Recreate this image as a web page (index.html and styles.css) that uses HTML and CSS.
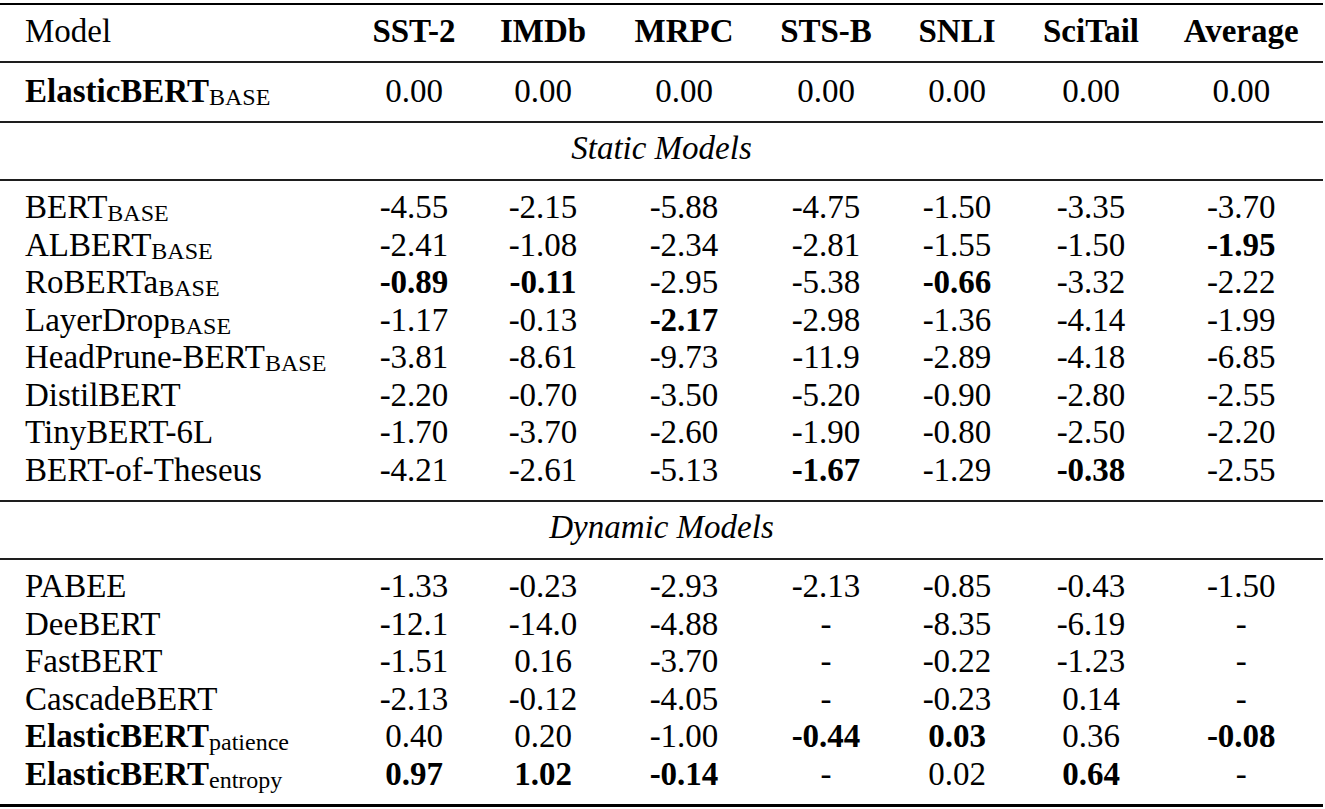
FILE: index.html
```html
<!DOCTYPE html>
<html lang="en">
<head>
<meta charset="utf-8">
<title>ElasticBERT results</title>
<link rel="stylesheet" href="styles.css">
</head>
<body>
<div class="table">
  <div class="section sec-head">
    <div class="grid">
      <div class="cell name">Model</div>
      <div class="cell b">SST-2</div>
      <div class="cell b">IMDb</div>
      <div class="cell b">MRPC</div>
      <div class="cell b">STS-B</div>
      <div class="cell b">SNLI</div>
      <div class="cell b">SciTail</div>
      <div class="cell b">Average</div>
    </div>
  </div>
  <div class="section sec-base">
    <div class="grid">
      <div class="cell name"><span class="b">ElasticBERT</span><span class="sub">BASE</span></div>
      <div class="cell">0.00</div>
      <div class="cell">0.00</div>
      <div class="cell">0.00</div>
      <div class="cell">0.00</div>
      <div class="cell">0.00</div>
      <div class="cell">0.00</div>
      <div class="cell">0.00</div>
    </div>
  </div>
  <div class="section sec-title">
    <div class="title">Static Models</div>
  </div>
  <div class="section sec-rows">
    <div class="grid">
      <div class="cell name">BERT<span class="sub">BASE</span></div>
      <div class="cell">-4.55</div><div class="cell">-2.15</div><div class="cell">-5.88</div><div class="cell">-4.75</div><div class="cell">-1.50</div><div class="cell">-3.35</div><div class="cell">-3.70</div>

      <div class="cell name">ALBERT<span class="sub">BASE</span></div>
      <div class="cell">-2.41</div><div class="cell">-1.08</div><div class="cell">-2.34</div><div class="cell">-2.81</div><div class="cell">-1.55</div><div class="cell">-1.50</div><div class="cell b">-1.95</div>

      <div class="cell name">RoBERTa<span class="sub">BASE</span></div>
      <div class="cell b">-0.89</div><div class="cell b">-0.11</div><div class="cell">-2.95</div><div class="cell">-5.38</div><div class="cell b">-0.66</div><div class="cell">-3.32</div><div class="cell">-2.22</div>

      <div class="cell name">LayerDrop<span class="sub">BASE</span></div>
      <div class="cell">-1.17</div><div class="cell">-0.13</div><div class="cell b">-2.17</div><div class="cell">-2.98</div><div class="cell">-1.36</div><div class="cell">-4.14</div><div class="cell">-1.99</div>

      <div class="cell name">HeadPrune-BERT<span class="sub">BASE</span></div>
      <div class="cell">-3.81</div><div class="cell">-8.61</div><div class="cell">-9.73</div><div class="cell">-11.9</div><div class="cell">-2.89</div><div class="cell">-4.18</div><div class="cell">-6.85</div>

      <div class="cell name">DistilBERT</div>
      <div class="cell">-2.20</div><div class="cell">-0.70</div><div class="cell">-3.50</div><div class="cell">-5.20</div><div class="cell">-0.90</div><div class="cell">-2.80</div><div class="cell">-2.55</div>

      <div class="cell name">TinyBERT-6L</div>
      <div class="cell">-1.70</div><div class="cell">-3.70</div><div class="cell">-2.60</div><div class="cell">-1.90</div><div class="cell">-0.80</div><div class="cell">-2.50</div><div class="cell">-2.20</div>

      <div class="cell name">BERT-of-Theseus</div>
      <div class="cell">-4.21</div><div class="cell">-2.61</div><div class="cell">-5.13</div><div class="cell b">-1.67</div><div class="cell">-1.29</div><div class="cell b">-0.38</div><div class="cell">-2.55</div>
    </div>
  </div>
  <div class="section sec-title">
    <div class="title">Dynamic Models</div>
  </div>
  <div class="section sec-rows last">
    <div class="grid">
      <div class="cell name">PABEE</div>
      <div class="cell">-1.33</div><div class="cell">-0.23</div><div class="cell">-2.93</div><div class="cell">-2.13</div><div class="cell">-0.85</div><div class="cell">-0.43</div><div class="cell">-1.50</div>

      <div class="cell name">DeeBERT</div>
      <div class="cell">-12.1</div><div class="cell">-14.0</div><div class="cell">-4.88</div><div class="cell">-</div><div class="cell">-8.35</div><div class="cell">-6.19</div><div class="cell">-</div>

      <div class="cell name">FastBERT</div>
      <div class="cell">-1.51</div><div class="cell">0.16</div><div class="cell">-3.70</div><div class="cell">-</div><div class="cell">-0.22</div><div class="cell">-1.23</div><div class="cell">-</div>

      <div class="cell name">CascadeBERT</div>
      <div class="cell">-2.13</div><div class="cell">-0.12</div><div class="cell">-4.05</div><div class="cell">-</div><div class="cell">-0.23</div><div class="cell">0.14</div><div class="cell">-</div>

      <div class="cell name"><span class="b">ElasticBERT</span><span class="sub">patience</span></div>
      <div class="cell">0.40</div><div class="cell">0.20</div><div class="cell">-1.00</div><div class="cell b">-0.44</div><div class="cell b">0.03</div><div class="cell">0.36</div><div class="cell b">-0.08</div>

      <div class="cell name"><span class="b">ElasticBERT</span><span class="sub">entropy</span></div>
      <div class="cell b">0.97</div><div class="cell b">1.02</div><div class="cell b">-0.14</div><div class="cell">-</div><div class="cell">0.02</div><div class="cell b">0.64</div><div class="cell">-</div>
    </div>
  </div>
</div>
</body>
</html>
```

FILE: styles.css
```css
html, body {
  margin: 0;
  padding: 0;
  background: #ffffff;
}

body {
  font-family: "Liberation Serif", "Times New Roman", serif;
  font-size: 33px;
  color: #000000;
}

.table {
  width: 1323px;
  margin-top: 3px;
  border-top: 2px solid #000000;
  border-bottom: 3px solid #000000;
}

.section {
  border-bottom: 2px solid #1e1e1e;
}

.section.last {
  border-bottom: none;
}

.grid {
  display: grid;
  grid-template-columns: 349.5px 129px 129px 153px 131px 131px 137px 163.5px;
  line-height: 37.5px;
}

.cell {
  text-align: center;
  white-space: nowrap;
}

.cell.name {
  text-align: left;
  padding-left: 25px;
}

.b {
  font-weight: bold;
}

.sub {
  font-size: 24px;
  line-height: 0;
  vertical-align: -3px;
}

.title {
  font-style: italic;
  text-align: center;
  line-height: 37.5px;
}

.sec-head {
  padding: 8px 0 10.5px;
}

.sec-base {
  padding: 10px 0 10.5px;
}

.sec-title {
  padding: 7px 0 11.5px;
}

.sec-rows {
  padding: 8px 0 11px;
}
```
